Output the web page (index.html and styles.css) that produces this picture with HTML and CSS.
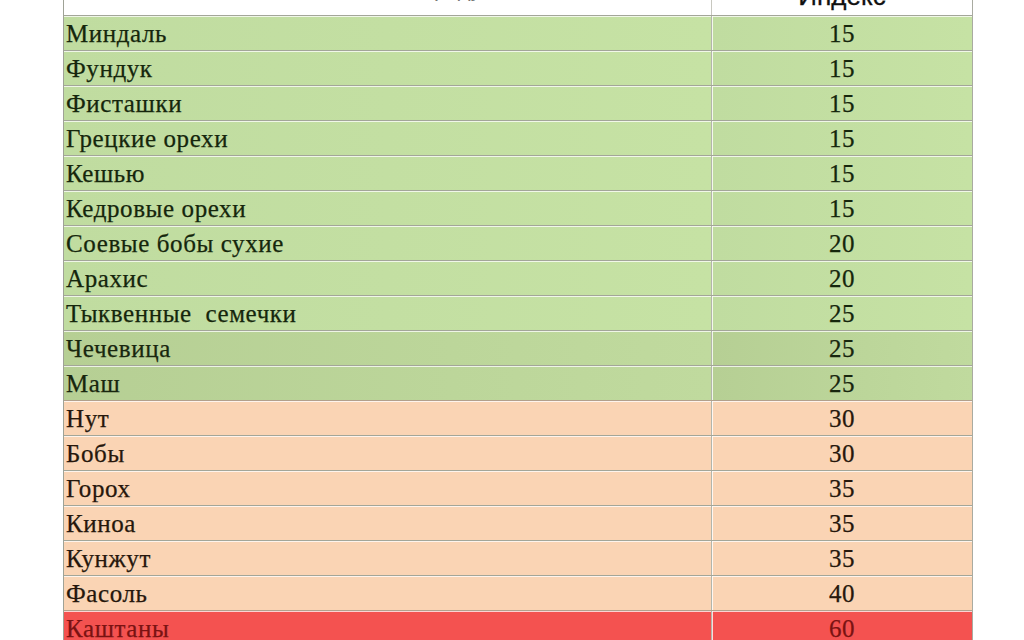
FILE: index.html
```html
<!DOCTYPE html>
<html lang="ru">
<head>
<meta charset="utf-8">
<title>Гликемический индекс</title>
<link rel="stylesheet" href="styles.css">
</head>
<body>
<div class="table">
  <div class="row head">
    <div class="cell name">Наименование продукта</div>
    <div class="cell val">Индекс</div>
  </div>
  <div class="row green"><div class="cell name">Миндаль</div><div class="cell val">15</div></div>
  <div class="row green"><div class="cell name">Фундук</div><div class="cell val">15</div></div>
  <div class="row green"><div class="cell name">Фисташки</div><div class="cell val">15</div></div>
  <div class="row green"><div class="cell name">Грецкие орехи</div><div class="cell val">15</div></div>
  <div class="row green"><div class="cell name">Кешью</div><div class="cell val">15</div></div>
  <div class="row green"><div class="cell name">Кедровые орехи</div><div class="cell val">15</div></div>
  <div class="row green"><div class="cell name">Соевые бобы сухие</div><div class="cell val">20</div></div>
  <div class="row green"><div class="cell name">Арахис</div><div class="cell val">20</div></div>
  <div class="row green"><div class="cell name">Тыквенные&nbsp; семечки</div><div class="cell val">25</div></div>
  <div class="row dgreen"><div class="cell name">Чечевица</div><div class="cell val">25</div></div>
  <div class="row dgreen"><div class="cell name">Маш</div><div class="cell val">25</div></div>
  <div class="row peach"><div class="cell name">Нут</div><div class="cell val">30</div></div>
  <div class="row peach"><div class="cell name">Бобы</div><div class="cell val">30</div></div>
  <div class="row peach"><div class="cell name">Горох</div><div class="cell val">35</div></div>
  <div class="row peach"><div class="cell name">Киноа</div><div class="cell val">35</div></div>
  <div class="row peach"><div class="cell name">Кунжут</div><div class="cell val">35</div></div>
  <div class="row peach"><div class="cell name">Фасоль</div><div class="cell val">40</div></div>
  <div class="row red"><div class="cell name">Каштаны</div><div class="cell val">60</div></div>
</div>
</body>
</html>
```
FILE: styles.css
```css
html, body {
  margin: 0;
  padding: 0;
  background: #ffffff;
}
body {
  overflow: hidden;
  height: 640px;
}
.table {
  margin-left: 63px;
  width: 908px;
  margin-top: -36px;
  border-left: 1px solid #9fa296;
  border-right: 1px solid #a9aba1;
  font-family: "Liberation Serif", "Times New Roman", serif;
}
.row {
  display: grid;
  grid-template-columns: 647px 1fr;
  height: 35px;
  box-sizing: border-box;
  border-top: 1px solid #a3a699;
}
.cell {
  box-sizing: border-box;
  font-size: 25px;
  letter-spacing: 0.6px;
  line-height: 33px;
  padding-top: 1px;
  box-shadow: inset 0 1px 0 rgba(255,255,255,0.75);
  white-space: nowrap;
  -webkit-text-stroke: 0.25px currentColor;
}
.name {
  padding-left: 2px;
}
.val {
  text-align: center;
  border-left: 1px solid #b3b5ab;
  box-shadow: inset 0 1px 0 rgba(255,255,255,0.75), inset 1px 0 0 rgba(255,255,255,0.8);
}
.head {
  height: 51px;
  border-top: none;
  background: #ffffff;
}
.head .cell {
  font-family: "Liberation Sans", Arial, sans-serif;
  font-size: 26px;
  letter-spacing: 0;
  line-height: 28px;
  color: #111111;
  box-shadow: none;
  -webkit-text-stroke: 0.3px currentColor;
  overflow: hidden;
}
.head .val {
  padding-top: 18px;
  border-left: 1px solid #c8c8c0;
}
.head .name {
  text-align: center;
  font-size: 22px;
  padding-top: 11px;
  color: #777;
  -webkit-text-stroke: 0;
}
.green .cell {
  background: linear-gradient(90deg, #c0dca0 0%, #c6e2a4 100%);
  color: #15260c;
}
.dgreen .cell {
  background: linear-gradient(90deg, #b6cf94 0%, #bcd69a 60%, #c0da9e 100%);
  color: #18260e;
}
.peach .cell {
  background: #fad4b4;
  color: #26170c;
}
.red .cell {
  background: #f45250;
  color: #7a1212;
}
.row.dgreen + .row.peach,
.row.peach + .row.red {
  border-top-color: #b2a08c;
}
```
